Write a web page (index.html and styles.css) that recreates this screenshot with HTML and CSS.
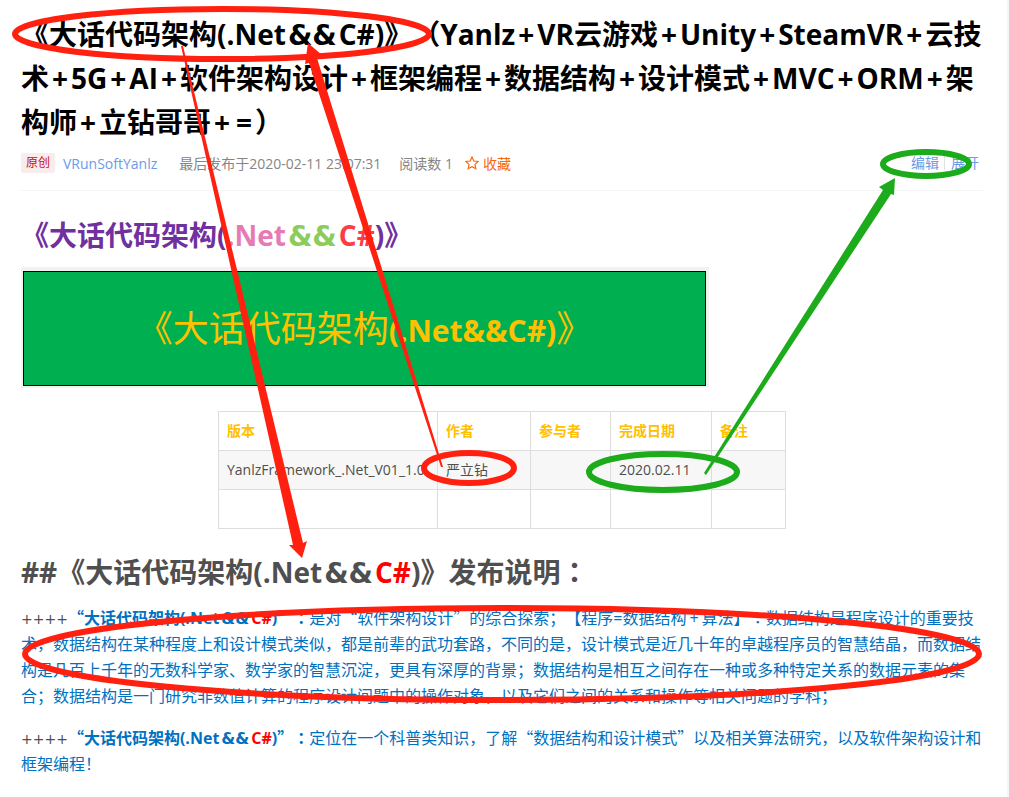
FILE: index.html
```html
<!DOCTYPE html>
<html lang="zh-CN">
<head>
<meta charset="UTF-8">
<meta name="viewport" content="width=device-width, initial-scale=1.0">
<title>《大话代码架构(.Net&amp;&amp;C#)》</title>
<link rel="stylesheet" href="styles.css">
</head>
<body>
<main class="article">
    <h1>《大话代码架构(.Net<span class="amp">&amp;&amp;</span>C#)》（Yanlz<i>+</i>VR云游戏<i>+</i>Unity<i>+</i>SteamVR<i>+</i>云技<br>术<i>+</i>5G<i>+</i>AI<i>+</i>软件架构设计<i>+</i>框架编程<i>+</i>数据结构<i>+</i>设计模式<i>+</i>MVC<i>+</i>ORM<i>+</i>架<br>构师<i>+</i>立钻哥哥<i>+</i><i>=</i>）</h1>

    <div class="meta">
        <span class="badge">原创</span>
        <a href="#" class="author">VRunSoftYanlz</a>
        <span class="time">最后发布于2020-02-11 23:07:31</span>
        <span class="reads">阅读数 1</span>
        <button class="collect" type="button">
            <svg width="14" height="14" viewBox="0 0 14 14"><path d="M7 1l1.800 4 4.300.500-3.200 2.900.900 4.300L7 10.600l-3.800 2.100.9-4.300L.9 5.500l4.300-.5z"/></svg>
            收藏
        </button>
        <div class="operate">
            <a href="#">编辑</a>
            <a href="#">展开</a>
        </div>
    </div>

    <h2 class="title">《大话代码架构(<span class="pink">.Net</span><span class="green amp">&amp;&amp;</span><span class="red">C#</span>)》</h2>

    <div class="banner">
        <div class="banner-inner">《大话代码架构<b>(.Net&amp;&amp;C#)</b>》</div>
    </div>

    <table>
        <thead>
            <tr><th class="col-version">版本</th><th class="col-author">作者</th><th class="col-member">参与者</th><th class="col-date">完成日期</th><th class="col-note">备注</th></tr>
        </thead>
        <tbody>
            <tr><td>YanlzFramework_.Net_V01_1.0</td><td>严立钻</td><td></td><td>2020.02.11</td><td></td></tr>
            <tr><td></td><td></td><td></td><td></td><td></td></tr>
        </tbody>
    </table>

    <h2>##《大话代码架构(.Net<span class="amp">&amp;&amp;</span><em>C#</em>)》发布说明<span class="mid" lang="zh-TW">：</span></h2>

    <p><span class="plus">++++</span><strong><q>大话代码架构(.Net<span class="amp">&amp;&amp;</span><em>C#</em>)</q><span class="mid" lang="zh-TW">：</span></strong>是对<q>软件架构设计</q>的综合探索；【程序=数据结构<i>+</i>算法】<span class="mid" lang="zh-TW">：</span>数据结构是程序设计的重要技术，数据结构在某种程度上和设计模式类似，都是前辈的武功套路，不同的是，设计模式是近几十年的卓越程序员的智慧结晶，而数据结构是几百上千年的无数科学家、数学家的智慧沉淀，更具有深厚的背景；数据结构是相互之间存在一种或多种特定关系的数据元素的集合；数据结构是一门研究非数值计算的程序设计问题中的操作对象，以及它们之间的关系和操作等相关问题的学科；</p>

    <p><span class="plus">++++</span><strong><q>大话代码架构(.Net<span class="amp">&amp;&amp;</span><em>C#</em>)</q><span class="mid" lang="zh-TW">：</span></strong>定位在一个科普类知识，了解<q>数据结构和设计模式</q>以及相关算法研究，以及软件架构设计和框架编程！</p>

    <!-- hand-drawn marks over the article -->
    <svg class="marks" width="1009" height="797" viewBox="0 0 1009 797">
        <g class="mark-red">
            <ellipse cx="222" cy="34" rx="207" ry="25"/>
            <ellipse cx="469" cy="468" rx="45" ry="15"/>
            <ellipse cx="502" cy="654" rx="477" ry="46"/>
            <path d="M181 46L183 46L303 543L307 541L302 558L289 545L293 545z"/>
            <path d="M441 467L309 63L305 64L308 43L322 55L317 58L443 467z"/>
        </g>
        <g class="mark-green">
            <ellipse cx="926" cy="164" rx="43" ry="12"/>
            <ellipse cx="663" cy="472" rx="74" ry="18"/>
            <path d="M704 473L883 190L879 187L895 178L894 195L891 194L706 475z"/>
        </g>
    </svg>
</main>
</body>
</html>
```
FILE: styles.css
```css
* {
    box-sizing: border-box;
}

body {
    margin: 0;
    background: #f5f6f7;
    font-family: "Open Sans", "Noto Sans CJK SC", sans-serif;
    color: #4f4f4f;
    text-spacing-trim: space-all;
}

.article {
    position: relative;
    min-height: 100vh;
    margin-right: 2px;
    padding: 12px 24px 20px 21px;
    background: #fff;
}

h1 {
    margin: 0;
    font-size: 28px;
    line-height: 44px;
    color: #000;
}

i {
    margin: 0 3px;
    font-style: normal;
}

h2 {
    margin: 0;
    font-size: 28px;
    line-height: 44px;
}

a {
    color: #6b9be8;
    text-decoration: none;
}

.meta {
    display: flex;
    align-items: center;
    height: 47px;
    padding-bottom: 8px;
    margin-bottom: 22px;
    border-bottom: 1px solid #f4f4f4;
    font-size: 14px;
    color: #858585;
}

.badge {
    padding: 0 5px;
    margin-right: 8px;
    border-radius: 2px;
    background: #f9ecec;
    color: #ca0c16;
    font-size: 12px;
    line-height: 20px;
}

.time {
    margin: 0 18px 0 22px;
}

.collect {
    display: flex;
    align-items: center;
    gap: 4px;
    margin-left: 12px;
    padding: 0;
    border: 0;
    background: none;
    color: #f76a0c;
    font: inherit;
}

.collect path {
    fill: none;
    stroke: #f76a0c;
    stroke-width: 1.2;
}

.operate {
    display: flex;
    margin-left: auto;
    padding-right: 4px;
    line-height: 14px;
}

.operate a + a {
    margin-left: 5px;
    padding-left: 6px;
    border-left: 1px solid #e0e0e0;
}

.title { color: #7030a0; }
.pink { color: #e67ab5; }
.green { color: #8ccc5c; }
.red { color: #ff3b46; }

.amp {
    padding: 0 2px;
    font-family: "DejaVu Sans", sans-serif;
    line-height: 1;
}

.banner {
    width: 688px;
    max-width: 100%;
    margin: 10px 0 23px;
    padding: 4px 3px 2px 2px;
    background: #f2f2f2;
}

.banner-inner {
    border: 1px solid #000;
    background: #00b050;
    color: #ffc000;
    font-size: 36px;
    line-height: 113px;
    height: 115px;
    text-align: center;
}

.banner b {
    font-size: 30px;
    line-height: 30px;
}

table {
    margin: 0 auto 21px;
    border-collapse: collapse;
    table-layout: fixed;
    width: 568px;
    font-size: 14px;
    line-height: 22px;
}

th,
td {
    height: 39px;
    padding: 8px;
    border: 1px solid #ddd;
    text-align: left;
    white-space: nowrap;
}

th { color: #ffc000; }
tbody tr:first-child { background: #f7f7f7; }

.col-version { width: 219px; }
.col-author { width: 93px; }
.col-member { width: 80px; }
.col-date { width: 101px; }

p {
    margin: 0 0 16px;
    font-size: 16px;
    line-height: 26px;
    color: #0070c0;
}

h2 + p { margin-top: 11px; }

em {
    font-style: normal;
    color: #f00;
}

.plus {
    color: #4f4f4f;
    font-family: "DejaVu Sans", sans-serif;
    font-size: 14px;
    line-height: 1;
}

q { quotes: "“" "”"; }

q::before,
q::after {
    font-family: "Noto Sans CJK SC", sans-serif;
    line-height: 1;
}

/* centred full-width colon */
.mid {
    font-family: "Noto Sans CJK TC", sans-serif;
    line-height: 1;
}

.marks {
    position: absolute;
    top: 0;
    left: 0;
    pointer-events: none;
}

.marks ellipse {
    fill: none;
    stroke-width: 6;
}

.mark-red ellipse { stroke: #ff2010; }
.mark-red path { fill: #ff2010; }
.mark-green ellipse { stroke: #1cab1a; }
.mark-green path { fill: #1cab1a; }
```
